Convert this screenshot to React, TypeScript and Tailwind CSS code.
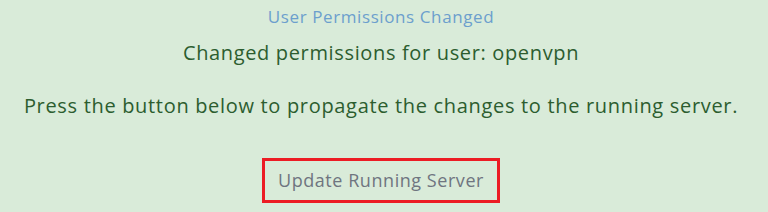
import React from 'react';

export default function App() {
  return (
    <div className="w-[768px] h-[212px] pr-[6px] bg-[#d9ebd9] flex flex-col items-center overflow-hidden" style={{ fontFamily: '"Open Sans", "Liberation Sans", sans-serif' }}>
      <div className="mt-[5px] text-[17px] leading-[24px] tracking-[0.6px] text-[#6c9fcd]">User Permissions Changed</div>
      <div className="mt-[10px] text-[20px] leading-[28px] tracking-[0.65px] text-[#2c5d2f]">Changed permissions for user: openvpn</div>
      <div className="mt-[25px] text-[20px] leading-[28px] tracking-[0.68px] whitespace-nowrap text-[#2c5d2f]">
        Press the button below to propagate the changes to the running server.
      </div>
      <button className="mt-[38px] w-[238px] h-[45px] border-[3px] border-[#ec1c24] text-[18px] tracking-[0.55px] text-[#6f7580]">
        Update Running Server
      </button>
    </div>
  );
}
